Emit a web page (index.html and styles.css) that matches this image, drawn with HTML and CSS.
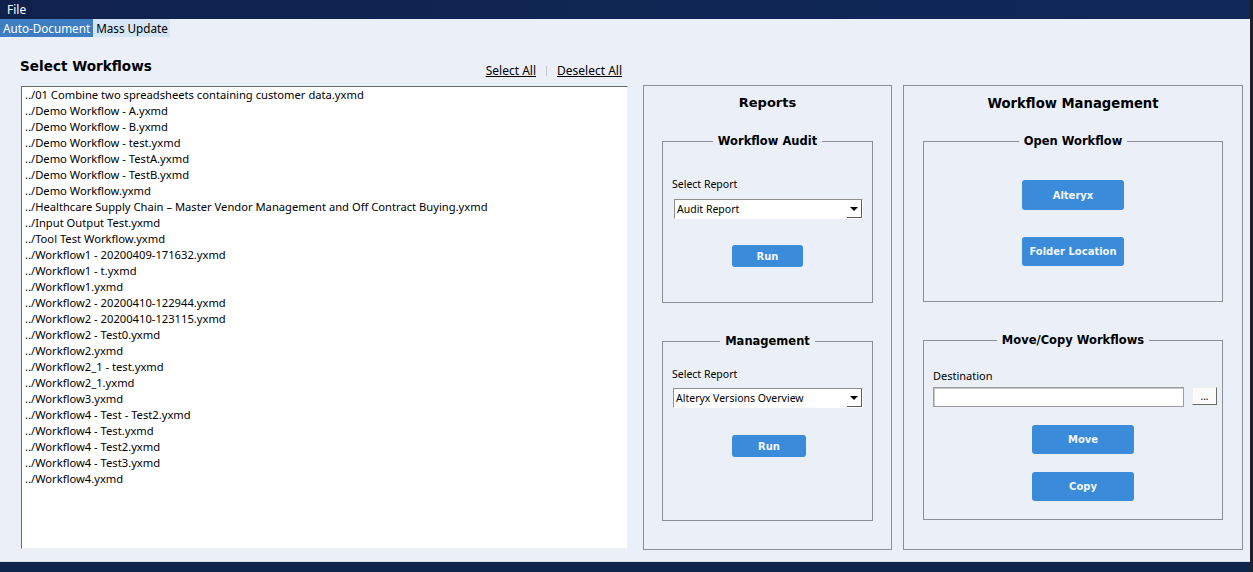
FILE: index.html
```html
<!DOCTYPE html>
<html lang="en">
<head>
    <meta charset="UTF-8">
    <meta name="viewport" content="width=device-width, initial-scale=1.0">
    <title>Auto-Document</title>
    <link rel="stylesheet" href="styles.css">
</head>
<body>
<div class="window">
    <div class="menubar"><span class="menu-item">File</span></div>

    <div class="tabs">
        <span class="tab active">Auto-Document</span>
        <span class="tab">Mass Update</span>
    </div>

    <div class="main">
        <section class="workflows">
            <div class="wf-head">
                <h2>Select Workflows</h2>
                <div class="links">
                    <a href="#">Select All</a>
                    <span class="sep"></span>
                    <a href="#">Deselect All</a>
                </div>
            </div>
            <ul class="wf-list">
                <li>../01 Combine two spreadsheets containing customer data.yxmd</li>
                <li>../Demo Workflow - A.yxmd</li>
                <li>../Demo Workflow - B.yxmd</li>
                <li>../Demo Workflow - test.yxmd</li>
                <li>../Demo Workflow - TestA.yxmd</li>
                <li>../Demo Workflow - TestB.yxmd</li>
                <li>../Demo Workflow.yxmd</li>
                <li>../Healthcare Supply Chain – Master Vendor Management and Off Contract Buying.yxmd</li>
                <li>../Input Output Test.yxmd</li>
                <li>../Tool Test Workflow.yxmd</li>
                <li>../Workflow1 - 20200409-171632.yxmd</li>
                <li>../Workflow1 - t.yxmd</li>
                <li>../Workflow1.yxmd</li>
                <li>../Workflow2 - 20200410-122944.yxmd</li>
                <li>../Workflow2 - 20200410-123115.yxmd</li>
                <li>../Workflow2 - Test0.yxmd</li>
                <li>../Workflow2.yxmd</li>
                <li>../Workflow2_1 - test.yxmd</li>
                <li>../Workflow2_1.yxmd</li>
                <li>../Workflow3.yxmd</li>
                <li>../Workflow4 - Test - Test2.yxmd</li>
                <li>../Workflow4 - Test.yxmd</li>
                <li>../Workflow4 - Test2.yxmd</li>
                <li>../Workflow4 - Test3.yxmd</li>
                <li>../Workflow4.yxmd</li>
            </ul>
        </section>

        <section class="panel reports">
            <h2 class="panel-title">Reports</h2>

            <fieldset class="group audit">
                <legend>Workflow Audit</legend>
                <div class="field-label">Select Report</div>
                <div class="combo">
                    <span class="combo-text">Audit Report</span>
                    <span class="combo-btn"><i class="arrow"></i></span>
                </div>
                <button class="btn btn-run">Run</button>
            </fieldset>

            <fieldset class="group management">
                <legend>Management</legend>
                <div class="field-label">Select Report</div>
                <div class="combo">
                    <span class="combo-text">Alteryx Versions Overview</span>
                    <span class="combo-btn"><i class="arrow"></i></span>
                </div>
                <button class="btn btn-run">Run</button>
            </fieldset>
        </section>

        <section class="panel wf-manage">
            <h2 class="panel-title">Workflow Management</h2>

            <fieldset class="group open-wf">
                <legend>Open Workflow</legend>
                <button class="btn btn-wide">Alteryx</button>
                <button class="btn btn-wide second">Folder Location</button>
            </fieldset>

            <fieldset class="group move-copy">
                <legend>Move/Copy Workflows</legend>
                <div class="field-label dest">Destination</div>
                <div class="dest-row">
                    <div class="text-input"></div>
                    <button class="browse">...</button>
                </div>
                <button class="btn btn-wide">Move</button>
                <button class="btn btn-wide second">Copy</button>
            </fieldset>
        </section>
    </div>

    <div class="statusbar"></div>
</div>
</body>
</html>
```

FILE: styles.css
```css
html, body { margin: 0; padding: 0; }
body { background: #ebeff8; font-family: "Noto Sans", "Liberation Sans", sans-serif; color: #000; }

.window { width: 1250px; height: 572px; border-right: 3px solid #1d2027; display: flex; flex-direction: column; background: #ebeff8; }

/* menu + tabs */
.menubar { height: 19px; background: linear-gradient(90deg, #10224c, #0f295a); display: flex; align-items: center; padding-left: 7px; }
.menu-item { color: #fff; font-size: 12px; line-height: 19px; }
.tabs { height: 18px; display: flex; }
.tab { font-size: 11.7px; line-height: 18px; padding: 0 2px 0 3px; background: #d5e5f3; color: #000; }
.tab.active { background: #3c7ec1; color: #fff; padding-right: 3px; }

.main { flex: 1; display: flex; padding: 0 7px 11px 20px; }

/* workflow list */
.workflows { width: 608px; display: flex; flex-direction: column; }
.wf-head { height: 49px; display: flex; justify-content: space-between; align-items: flex-start; }
.wf-head h2 { margin: 0; padding-top: 21px; font: bold 13.6px/17px "DejaVu Sans", Verdana, sans-serif; }
.links { padding-top: 26px; padding-right: 6px; display: flex; align-items: center; font-size: 12px; line-height: 16px; }
.links a { color: #000; text-decoration: underline; }
.sep { width: 1px; height: 10px; background: #c4c8d0; margin: 0 10px; }
.wf-list { list-style: none; margin: 0 0 0 1px; padding: 0 3px; height: 463px; box-sizing: border-box; background: #fff; border: 1px solid; border-color: #6a6a6a #eef0f4 #eef0f4 #6a6a6a; font-size: 11.2px; line-height: 16px; }
.wf-list li { white-space: nowrap; }

/* right panels */
.panel { margin-top: 48px; height: 465px; box-sizing: border-box; border: 1px solid #8b8f98; }
.reports { width: 249px; margin-left: 15px; padding: 0 18px; }
.wf-manage { width: 340px; margin-left: 11px; padding: 0 19px; }
.panel-title { margin: 8px 0 0; text-align: center; font: bold 13px/18px "DejaVu Sans", Verdana, sans-serif; }
.wf-manage .panel-title { margin-top: 9px; margin-bottom: -1px; font-size: 13.2px; }

.group { margin: 21px 0 0; padding: 0; box-sizing: border-box; border: 1px solid #8b8f98; min-width: 0; }
.group legend { margin: 0 auto; padding: 0 5px; font: bold 11.5px/16px "DejaVu Sans", Verdana, sans-serif; }
.audit { height: 170px; }
.open-wf { height: 169px; }
.management, .move-copy { margin-top: 30px; height: 188px; }

.field-label { font-size: 10.5px; line-height: 14px; margin-left: 9px; }
.audit .field-label { margin-top: 28px; }
.management .field-label { margin-top: 18px; margin-left: 9px; }

.combo { display: flex; height: 20px; box-sizing: border-box; margin: 8px 9px 0 11px; background: #fff; border: 1px solid; border-color: #8e8e8e #fff #fff #8e8e8e; }
.management .combo { margin-top: 7px; margin-left: 10px; }
.combo-text { flex: 1; font-size: 10.5px; line-height: 18px; padding-left: 2px; }
.combo-btn { width: 14px; border-right: 1px solid #5c5c5c; border-bottom: 1px solid #5c5c5c; display: flex; align-items: center; justify-content: center; }
.arrow { width: 0; height: 0; border-left: 4px solid transparent; border-right: 4px solid transparent; border-top: 4px solid #000; }

.btn { display: block; margin: 0 auto; background: #3a8bd9; color: #f2f6fb; border: none; border-radius: 3px; font: bold 10px "DejaVu Sans", Verdana, sans-serif; padding: 0; }
.btn-run { height: 22px; }
.audit .btn-run { width: 71px; margin-top: 26px; }
.management .btn-run { width: 74px; margin-top: 27px; margin-left: 69px; }
.btn-wide { width: 102px; height: 29px; }
.open-wf .btn-wide { height: 30px; margin-top: 31px; }
.open-wf .btn-wide.second { height: 29px; margin-top: 27px; }

.field-label.dest { font-size: 11px; margin-top: 21px; }
.dest-row { display: flex; align-items: flex-start; margin: 4px 0 0 9px; }
.text-input { width: 251px; height: 20px; box-sizing: border-box; background: #fff; border: 1px solid #9c9c9c; box-shadow: inset 1px 1px 0 #c9c9c9; }
.browse { width: 25px; height: 18px; margin-left: 8px; padding: 0; background: #fbfbfb; border: 1px solid; border-color: #f0f0f0 #6a6a6a #6a6a6a #f0f0f0; font-size: 10px; line-height: 12px; font-family: "Noto Sans", sans-serif; }
.move-copy .btn-wide { margin: 18px 0 0 108px; }
.move-copy .btn-wide.second { margin-top: 18px; }

.statusbar { height: 11px; background: #0e264c; border-top: 1px solid #d9dde5; box-sizing: border-box; }
```
